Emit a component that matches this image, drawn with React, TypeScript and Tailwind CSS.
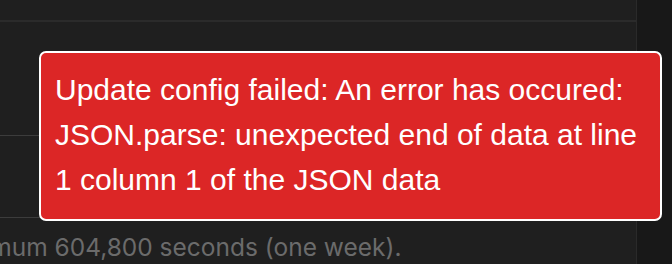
export default function App() {
  return (
    <div className="relative flex h-[264px] w-[672px] overflow-hidden bg-[#1f1f1f]">
      <main className="flex w-[637px] flex-col overflow-hidden border-r border-[#2a2a2a]">
        <div className="h-[22px] shrink-0 border-b-2 border-[#2b2b2b]" />
        <div className="mt-[113px] h-[83px] shrink-0 border-y border-[#3c3c3c]" />
        <p
          className="mt-[13px] -ml-[65px] whitespace-nowrap text-[24.5px] leading-[32px] text-[#6b6b6b]"
          style={{ fontFamily: "Inter, sans-serif" }}
        >
          Maximum 604,800 seconds (one week).
        </p>
      </main>
      <aside className="flex-1 bg-[#181818]" />

      <div
        role="alert"
        className="absolute left-[39px] top-[51px] w-[623px] rounded-[7px] border-2 border-white bg-[#dc2626] px-[14px] pt-[14px] pb-[17px] text-[30px] leading-[45px] text-white"
        style={{ fontFamily: '"Liberation Sans", Arial, sans-serif' }}
      >
        Update config failed: An error has occured: JSON.parse: unexpected end
        of data at line 1 column 1 of the JSON data
      </div>
    </div>
  );
}
